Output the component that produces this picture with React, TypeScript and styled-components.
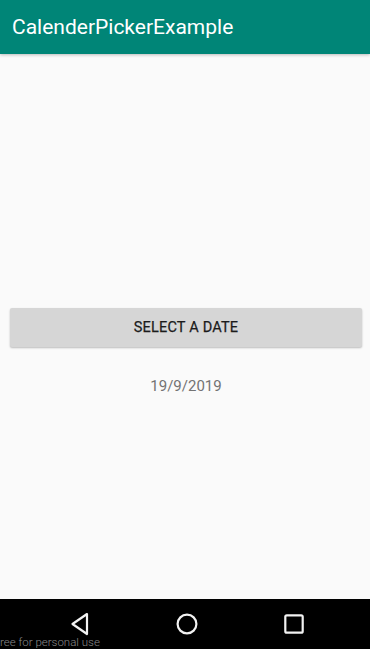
import React from "react";
import styled, { createGlobalStyle } from "styled-components";

const SELECTED_DATE = "19/9/2019";

function App() {
  return (
    <Screen>
      <GlobalStyle />
      <AppBar>
        <Title>CalenderPickerExample</Title>
      </AppBar>
      <Content>
        <SelectButton type="button">SELECT A DATE</SelectButton>
        <DateText>{SELECTED_DATE}</DateText>
      </Content>
      <NavBar>
        <NavButton aria-label="back">
          <svg width="20" height="24" viewBox="0 0 20 24">
            <path
              d="M17 2 L2.5 12 L17 22 Z"
              fill="none"
              stroke="#f2f2f2"
              strokeWidth="2.2"
              strokeLinejoin="round"
            />
          </svg>
        </NavButton>
        <NavButton aria-label="home">
          <svg width="22" height="22" viewBox="0 0 22 22">
            <circle cx="11" cy="11" r="9.4" fill="none" stroke="#f2f2f2" strokeWidth="2.2" />
          </svg>
        </NavButton>
        <NavButton aria-label="recents">
          <svg width="20" height="20" viewBox="0 0 20 20">
            <rect x="1.3" y="1.3" width="17.4" height="17.4" rx="1.5" fill="none" stroke="#f2f2f2" strokeWidth="2.2" />
          </svg>
        </NavButton>
        <Watermark>ree for personal use</Watermark>
      </NavBar>
    </Screen>
  );
}

export default App;

const GlobalStyle = createGlobalStyle`
  html, body {
    margin: 0;
    padding: 0;
    background: #fafafa;
  }
  body {
    font-family: Roboto, "Liberation Sans", sans-serif;
  }
`;

const Screen = styled.div`
  width: 370px;
  height: 649px;
  display: flex;
  flex-direction: column;
  background: #fafafa;
  overflow: hidden;
`;

const AppBar = styled.header`
  height: 54px;
  flex-shrink: 0;
  display: flex;
  align-items: center;
  padding: 0 12px;
  background: #008577;
  box-shadow: 0 1px 3px rgba(0, 0, 0, 0.25);
  position: relative;
  z-index: 1;
`;

const Title = styled.h1`
  margin: 0;
  font-size: 21px;
  font-weight: 400;
  color: #ffffff;
`;

const Content = styled.main`
  flex: 1;
  display: flex;
  flex-direction: column;
  align-items: stretch;
  padding: 254px 8px 0 10px;
`;

const SelectButton = styled.button`
  height: 39px;
  border: none;
  border-radius: 2px;
  background: #d6d6d6;
  box-shadow: 0 1px 2px rgba(0, 0, 0, 0.25);
  font-family: Roboto, "Liberation Sans", sans-serif;
  font-size: 14.5px;
  font-weight: 400;
  color: #1c1c1c;
  letter-spacing: 0.2px;
  -webkit-text-stroke: 0.25px #1c1c1c;
`;

const DateText = styled.p`
  margin: 30px 0 0;
  text-align: center;
  font-size: 15px;
  color: #737373;
`;

const NavBar = styled.nav`
  height: 50px;
  flex-shrink: 0;
  background: #000000;
  display: flex;
  align-items: center;
  justify-content: center;
  gap: 83px;
  padding-left: 3px;
  position: relative;
`;

const NavButton = styled.div`
  width: 24px;
  height: 24px;
  display: flex;
  align-items: center;
  justify-content: center;
`;

const Watermark = styled.span`
  position: absolute;
  left: 0;
  bottom: 0;
  font-size: 11.5px;
  font-weight: 300;
  color: #8a8a8a;
`;
